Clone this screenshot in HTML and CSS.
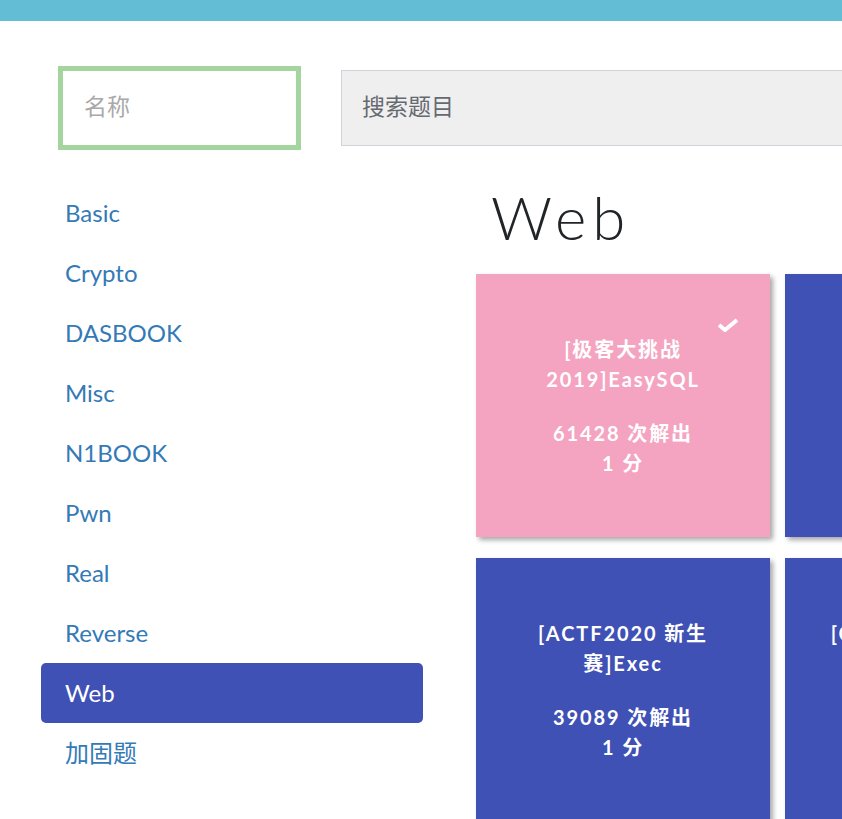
FILE: index.html
```html
<!DOCTYPE html>
<html lang="zh-CN">
<head>
<meta charset="utf-8">
<title>Challenges</title>
<link rel="stylesheet" href="styles.css">
</head>
<body>
<div class="topbar"></div>
<div class="page">
  <div class="search-row">
    <input class="name-input" type="text" placeholder="名称">
    <input class="search-input" type="text" placeholder="搜索题目">
  </div>
  <div class="layout">
    <nav class="sidebar">
      <a class="cat" href="#">Basic</a>
      <a class="cat" href="#">Crypto</a>
      <a class="cat" href="#">DASBOOK</a>
      <a class="cat" href="#">Misc</a>
      <a class="cat" href="#">N1BOOK</a>
      <a class="cat" href="#">Pwn</a>
      <a class="cat" href="#">Real</a>
      <a class="cat" href="#">Reverse</a>
      <a class="cat active" href="#">Web</a>
      <a class="cat" href="#">加固题</a>
    </nav>
    <main class="main">
      <h1 class="heading">Web</h1>
      <div class="grid">
        <div class="card solved">
          <svg class="check" viewBox="0 0 22 14" width="22" height="14"><path d="M2 7 L8 12 L20 2" fill="none" stroke="#fff" stroke-width="4" stroke-linejoin="miter"/></svg>
          <div class="title">[极客大挑战 2019]EasySQL</div>
          <div class="solves">61428 次解出</div>
          <div class="points">1 分</div>
        </div>
        <div class="card">
          <div class="title">[ACTF2020 新生赛]Include</div>
          <div class="solves">52710 次解出</div>
          <div class="points">1 分</div>
        </div>
        <div class="card">
          <div class="title">[ACTF2020 新生赛]Exec</div>
          <div class="solves">39089 次解出</div>
          <div class="points">1 分</div>
        </div>
        <div class="card">
          <div class="title">[CISCN2019 华北赛区]Hack World</div>
          <div class="solves">20351 次解出</div>
          <div class="points">1 分</div>
        </div>
      </div>
    </main>
  </div>
</div>
</body>
</html>
```

FILE: styles.css
```css
html, body {
  margin: 0;
  padding: 0;
  overflow: hidden;
  background: #fff;
}
body {
  font-family: Lato, "Noto Sans CJK SC", sans-serif;
  width: 842px;
  height: 819px;
}
.topbar {
  height: 21px;
  background: #62bdd5;
}
.page {
  width: 1300px;
}
.search-row {
  display: flex;
  align-items: center;
  padding-top: 45px;
  padding-left: 58px;
  height: 84px;
}
.name-input {
  box-sizing: border-box;
  width: 243px;
  height: 84px;
  border: 5px solid #a5d59e;
  outline: none;
  padding: 0 0 6px 21px;
  font-family: "Noto Sans CJK SC", sans-serif;
  font-size: 23px;
  color: #333;
  background: #fff;
}
.name-input::placeholder { color: #a9a9a9; }
.search-input {
  box-sizing: border-box;
  margin-left: 40px;
  width: 900px;
  height: 76px;
  border: 1px solid #cfd2d8;
  background: #efefef;
  outline: none;
  padding: 0 0 6px 20px;
  font-family: "Noto Sans CJK SC", sans-serif;
  font-size: 23px;
  color: #333;
}
.search-input::placeholder { color: #666a70; }
.layout {
  display: flex;
  padding-top: 33px;
}
.sidebar {
  display: flex;
  flex-direction: column;
  width: 382px;
  margin-left: 41px;
}
.cat {
  display: block;
  height: 60px;
  line-height: 60px;
  padding-left: 24px;
  font-size: 24px;
  color: #337ab7;
  text-decoration: none;
  border-radius: 5px;
}
.cat.active {
  background: #3f51b5;
  color: #fff;
}
.main {
  margin-left: 53px;
}
.heading {
  margin: 4px 0 27px 15px;
  font-size: 60px;
  line-height: 60px;
  font-weight: 300;
  color: #222528;
  letter-spacing: 6px;
}
.grid {
  display: grid;
  grid-template-columns: 294px 294px;
  column-gap: 15px;
  row-gap: 21px;
}
.card {
  position: relative;
  box-sizing: border-box;
  height: 263px;
  padding: 60px 43px;
  background: #3f51b5;
  color: #fff;
  text-align: center;
  font-weight: 700;
  font-size: 20px;
  line-height: 30px;
  letter-spacing: 1.9px;
  box-shadow: 3px 3px 5px rgba(0, 0, 0, 0.35);
}
.card.solved {
  background: #f4a4c0;
}
.check {
  position: absolute;
  top: 44px;
  right: 31px;
}
.title {
  margin-bottom: 24px;
}
```
